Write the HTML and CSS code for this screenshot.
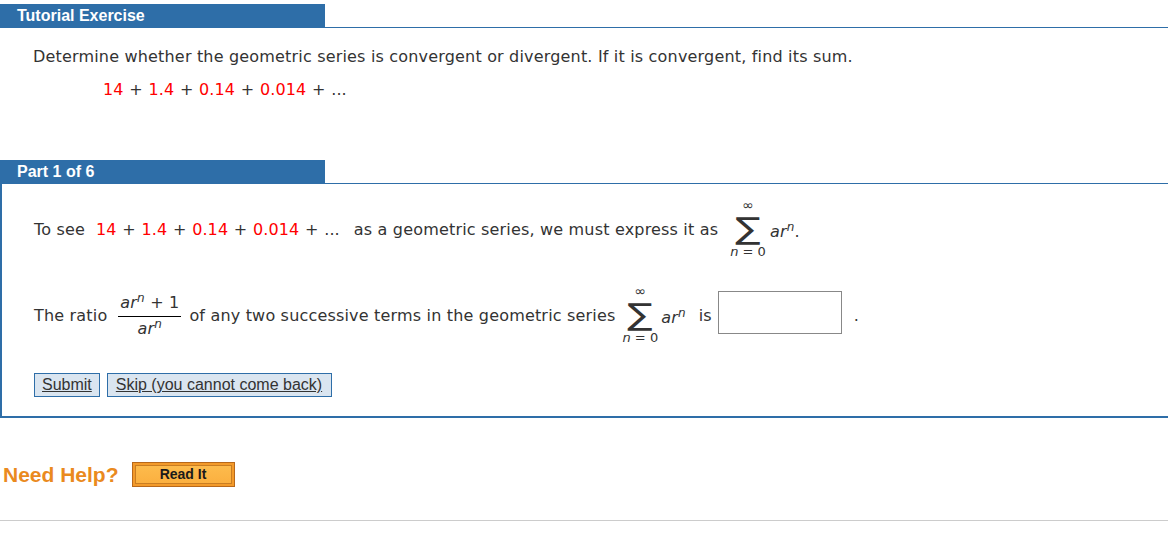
FILE: index.html
```html
<!DOCTYPE html>
<html>
<head>
<meta charset="utf-8">
<link rel="stylesheet" href="styles.css">
</head>
<body>
<div class="page">
  <div class="tabrow first">
    <div class="tab">Tutorial Exercise</div>
    <div class="tabline"></div>
  </div>
  <div class="intro">
    <p class="question">Determine whether the geometric series is convergent or divergent. If it is convergent, find its sum.</p>
    <p class="series"><span class="r">14</span> + <span class="r">1.4</span> + <span class="r">0.14</span> + <span class="r">0.014</span> + ...</p>
  </div>

  <div class="tabrow part">
    <div class="tab">Part 1 of 6</div>
    <div class="tabline"></div>
  </div>
  <div class="partbox">
    <div class="mrow row1">
      <span>To see</span>
      <span class="ser"><span class="r">14</span> + <span class="r">1.4</span> + <span class="r">0.14</span> + <span class="r">0.014</span> + ...</span>
      <span class="as">as a geometric series, we must express it as</span>
      <span class="sum"><span class="lim inf">∞</span><span class="sigma">∑</span><span class="lim low"><i>n</i> = 0</span></span>
      <span class="term"><i>ar<sup>n</sup></i>.</span>
    </div>
    <div class="mrow row2">
      <span>The ratio</span>
      <span class="frac"><span class="num"><i>ar<sup>n</sup></i> + 1</span><span class="den"><i>ar<sup>n</sup></i></span></span>
      <span>of any two successive terms in the geometric series</span>
      <span class="sum sum2"><span class="lim inf">∞</span><span class="sigma">∑</span><span class="lim low"><i>n</i> = 0</span></span>
      <span class="term2"><i>ar<sup>n</sup></i></span>
      <span class="is">is</span>
      <span class="answer"></span>
      <span class="dot">.</span>
    </div>
    <div class="buttons">
      <span class="btn">Submit</span>
      <span class="btn skip">Skip (you cannot come back)</span>
    </div>
  </div>

  <div class="help">
    <span class="needhelp">Need Help?</span>
    <span class="readit"><span class="readit-inner">Read It</span></span>
  </div>
  <div class="bottomline"></div>
</div>
</body>
</html>
```

FILE: styles.css
```css
body {
  margin: 0;
  background: #fff;
  font-family: "DejaVu Sans", Verdana, sans-serif;
  font-size: 16px;
  letter-spacing: 0.18px;
  color: #333;
}
.page {
  padding-top: 4px;
}
.tabrow {
  display: flex;
  align-items: flex-end;
}
.tab {
  width: 325px;
  height: 24px;
  background: #2e6ea8;
  color: #fff;
  font-family: "Liberation Sans", Arial, sans-serif;
  font-weight: bold;
  font-size: 16px;
  letter-spacing: 0;
  line-height: 24px;
  padding-left: 17px;
  box-sizing: border-box;
}
.tabline {
  flex: 1;
  border-bottom: 1px solid #2e6ea8;
}
.intro {
  padding: 19px 0 0 33px;
  height: 132px;
  box-sizing: border-box;
}
.intro p {
  margin: 0;
  line-height: 19px;
}
.series {
  margin-top: 14px !important;
  padding-left: 70px;
  word-spacing: 0.5px;
  letter-spacing: 0.1px;
}
.r {
  color: #f00;
}
.partbox {
  border-left: 2px solid #2e6ea8;
  border-bottom: 2px solid #2e6ea8;
  height: 234px;
  box-sizing: border-box;
  padding: 15px 0 0 32px;
}
.mrow {
  display: flex;
  align-items: center;
  white-space: pre;
  line-height: 19px;
}
.ser {
  margin: 0 14px 0 11px;
  word-spacing: 0.5px;
  letter-spacing: 0.1px;
}
.sum {
  display: inline-flex;
  flex-direction: column;
  align-items: center;
  margin-left: 12px;
}
.sum2 {
  margin-left: 7px;
}
.lim {
  font-size: 13px;
  line-height: 14px;
  letter-spacing: 0;
  color: #333;
}
.inf {
  font-size: 14px;
  line-height: 12px;
  height: 14px;
}
i {
  font-style: italic;
}
.sigma {
  font-size: 30px;
  line-height: 30px;
  height: 30px;
  font-family: "DejaVu Sans", sans-serif;
  transform: translateY(1px) scaleX(1.25);
}
.low {
  margin-top: 2px;
}
.term {
  margin-left: 4px;
  padding-top: 4px;
}
.term2 {
  margin-left: 3px;
  padding-top: 4px;
}
sup {
  font-size: 12px;
  vertical-align: 6px;
  line-height: 0;
}
.row2 {
  margin-top: 26px;
}
.frac {
  display: inline-flex;
  flex-direction: column;
  align-items: center;
  margin: 0 8px 0 11px;
}
.num {
  border-bottom: 1px solid #000;
  padding: 0 2px 4px;
  line-height: 19px;
}
.den {
  line-height: 19px;
  padding-top: 2px;
}
.is {
  margin-left: 13px;
}
.answer {
  display: inline-block;
  width: 124px;
  height: 43px;
  border: 1px solid #888;
  box-sizing: border-box;
  margin-left: 6px;
  margin-top: -5px;
}
.dot {
  margin-left: 12px;
}
.buttons {
  display: flex;
  gap: 7px;
  margin-top: 28px;
}
.btn {
  display: inline-block;
  height: 24px;
  line-height: 22px;
  box-sizing: border-box;
  border: 1px solid #2e6ea8;
  background: #dae5f0;
  color: #333;
  font-family: "Liberation Sans", Arial, sans-serif;
  font-size: 16px;
  letter-spacing: 0;
  text-decoration: underline;
  padding: 0 7px;
}
.skip {
  padding: 0 9px 0 8px;
}
.help {
  display: flex;
  align-items: center;
  margin-top: 44px;
  padding-left: 3px;
}
.needhelp {
  font-family: "Liberation Sans", Arial, sans-serif;
  font-weight: bold;
  font-size: 21px;
  letter-spacing: 0;
  color: #ea8a1e;
}
.readit {
  margin-left: 13px;
  width: 103px;
  height: 25px;
  box-sizing: border-box;
  border: 1px solid #b8681a;
  background: #f39a2a;
  padding: 2px;
  display: inline-flex;
}
.readit-inner {
  flex: 1;
  background: linear-gradient(#fdbb4c, #fbb040);
  border: 1px solid #c97d22;
  font-family: "Liberation Sans", Arial, sans-serif;
  font-weight: bold;
  font-size: 14px;
  letter-spacing: 0;
  color: #1a1a1a;
  text-align: center;
  line-height: 17px;
}
.bottomline {
  margin-top: 33px;
  border-top: 1px solid #ccc;
}
```
